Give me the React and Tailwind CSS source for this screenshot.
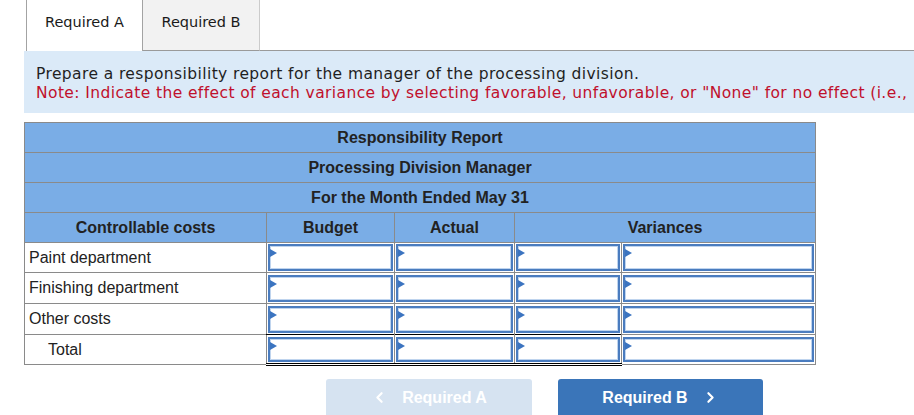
import React from 'react';
import { ChevronLeft, ChevronRight } from 'lucide-react';

const rows = [
  { label: 'Paint department', h: 'h-[30px]' },
  { label: 'Finishing department', h: 'h-[31px]' },
  { label: 'Other costs', h: 'h-[31px]' },
  { label: 'Total', h: 'h-[30px]', indent: true, total: true },
];

function AmountInput({ total }) {
  return (
    <div className={`relative w-full border-2 border-[#4a7cbf] bg-white shadow-[inset_0_0_0_1px_#bfd4ee] ${total ? 'h-[25px]' : 'h-[27px]'}`}>
      <span className="absolute left-0 top-[3px] h-0 w-0 border-y-[4px] border-l-[7px] border-y-transparent border-l-[#3b74c0]" />
    </div>
  );
}

export default function App() {
  const head = 'border border-[#8a8a8a] bg-[#7aade6] h-[30px] p-0 text-center font-bold text-[16px] text-[#222]';

  return (
    <div className="w-[914px] h-[415px] overflow-hidden bg-white font-['Liberation_Sans',Arial,sans-serif]">
      {/* tabs */}
      <div className="flex h-[51px] font-['DejaVu_Sans',Tahoma,sans-serif] text-[14.5px] text-[#1a1a1a]">
        <div className="w-[26px] shrink-0" />
        <div className="flex h-[51px] w-[117px] items-center justify-center border-x border-[#a3a3a3] bg-white pb-[5px]">
          Required A
        </div>
        <div className="flex h-[51px] w-[117px] items-center justify-center border-r border-b border-r-[#cbcbcb] border-b-[#9a9a9a] bg-[#f2f2f2] pb-[5px]">
          Required B
        </div>
        <div className="flex-1 border-b border-[#9a9a9a]" />
      </div>

      {/* instructions */}
      <div className="ml-[24px] h-[62px] bg-[#dbeaf8] pl-[12px] pt-[14px] text-[15.5px] leading-[19px] tracking-[0.4px] font-['DejaVu_Sans',Tahoma,sans-serif] whitespace-nowrap">
        <p className="text-[#1f1f1f]">Prepare a responsibility report for the manager of the processing division.</p>
        <p className="text-[#c0102c]">Note: Indicate the effect of each variance by selecting favorable, unfavorable, or "None" for no effect (i.e.,</p>
      </div>

      {/* report table */}
      <table className="ml-[24px] mt-[9px] w-[791px] table-fixed border-collapse">
        <colgroup>
          <col className="w-[242px]" />
          <col className="w-[128px]" />
          <col className="w-[120px]" />
          <col className="w-[107px]" />
          <col className="w-[194px]" />
        </colgroup>
        <tbody>
          <tr><td colSpan={5} className={head}>Responsibility Report</td></tr>
          <tr><td colSpan={5} className={head}>Processing Division Manager</td></tr>
          <tr><td colSpan={5} className={head}>For the Month Ended May 31</td></tr>
          <tr>
            <td className={head}>Controllable costs</td>
            <td className={head}>Budget</td>
            <td className={head}>Actual</td>
            <td colSpan={2} className={head}>Variances</td>
          </tr>
          {rows.map((r) => (
            <tr key={r.label}>
              <td className={`border border-[#8a8a8a] ${r.h} p-0 text-[16px] text-[#222] ${r.indent ? 'pl-[23px]' : 'pl-[4px]'}`}>{r.label}</td>
              {[0, 1, 2, 3].map((i) => (
                <td
                  key={i}
                  className={`border border-[#8a8a8a] ${r.h} p-px align-middle ${r.total && i < 3 ? 'border-t-black border-b-[3px] border-b-black border-double' : ''}`}
                >
                  <AmountInput total={r.total} />
                </td>
              ))}
            </tr>
          ))}
        </tbody>
      </table>

      {/* navigation */}
      <div className="ml-[326px] mt-[13px] flex gap-[26px]">
        <button className="flex h-[40px] w-[206px] items-center justify-center gap-[14px] rounded-t-[3px] bg-[#d6e3f1] pb-[3px] text-[16px] font-bold text-white">
          <ChevronLeft size={17} strokeWidth={3} />
          <span>Required A</span>
        </button>
        <button className="flex h-[40px] w-[205px] items-center justify-center gap-[14px] rounded-t-[3px] bg-[#3a75b9] pb-[3px] text-[16px] font-bold text-white">
          <span>Required B</span>
          <ChevronRight size={17} strokeWidth={3} />
        </button>
      </div>
    </div>
  );
}
